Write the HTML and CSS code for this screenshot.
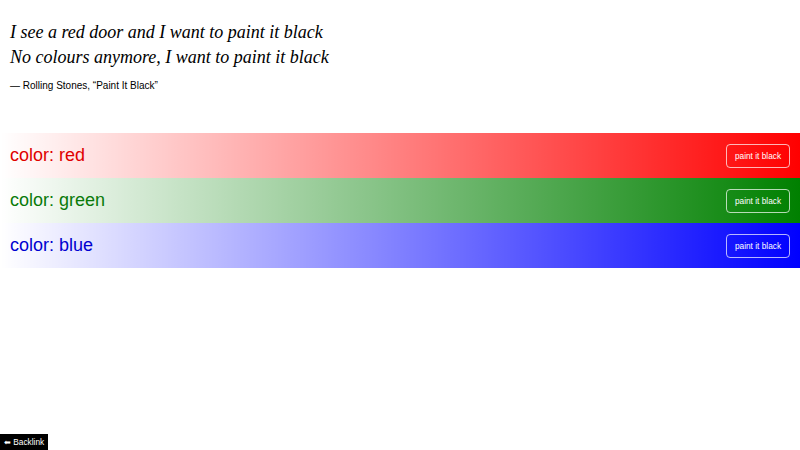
FILE: index.html
```html
<!DOCTYPE html>
<html lang="en">
<head>
<meta charset="utf-8">
<title>Paint It Black</title>
<link rel="stylesheet" href="styles.css">
</head>
<body>
<header class="quote">
  <p class="lyric">I see a red door and I want to paint it black<br>No colours anymore, I want to paint it black</p>
  <p class="cite">— Rolling Stones, “Paint It Black”</p>
</header>
<main class="rows">
  <div class="row row-red">
    <span class="label">color: red</span>
    <button class="paint">paint it black</button>
  </div>
  <div class="row row-green">
    <span class="label">color: green</span>
    <button class="paint">paint it black</button>
  </div>
  <div class="row row-blue">
    <span class="label">color: blue</span>
    <button class="paint">paint it black</button>
  </div>
</main>
<a class="backlink" href="#">⬅ Backlink</a>
</body>
</html>
```
FILE: styles.css
```css
html, body {
  margin: 0;
  padding: 0;
  background: #fff;
}

body {
  font-family: "Liberation Sans", Arial, sans-serif;
  color: #000;
  height: 450px;
  position: relative;
}

.quote {
  padding: 20px 10px 0;
}

.lyric {
  margin: 0;
  font-family: "Liberation Serif", "Times New Roman", serif;
  font-style: italic;
  font-size: 18px;
  line-height: 25px;
}

.cite {
  margin: 10px 0 0;
  font-size: 10px;
  line-height: 12px;
}

.rows {
  margin-top: 41px;
}

.row {
  height: 45px;
  display: flex;
  align-items: center;
  justify-content: space-between;
  padding: 0 10px;
}

.label {
  font-size: 18px;
}

.row-red { background: linear-gradient(to right, rgba(255,0,0,0), #f00); }
.row-red .label { color: #e00000; }
.row-green { background: linear-gradient(to right, rgba(0,128,0,0), #008000); }
.row-green .label { color: #0a7a0a; }
.row-blue { background: linear-gradient(to right, rgba(0,0,255,0), #00f); }
.row-blue .label { color: #0000d0; }

.paint {
  font-family: "Liberation Sans", Arial, sans-serif;
  font-size: 8.3px;
  color: #fff;
  background: transparent;
  border: 1px solid rgba(255,255,255,0.7);
  border-radius: 4px;
  height: 24px;
  width: 64px;
  padding: 0;
}

.backlink {
  position: absolute;
  left: 0;
  bottom: 0;
  background: #000;
  color: #fff;
  font-size: 8.3px;
  line-height: 16px;
  padding: 0 4px 0 4px;
  text-decoration: none;
}
```
